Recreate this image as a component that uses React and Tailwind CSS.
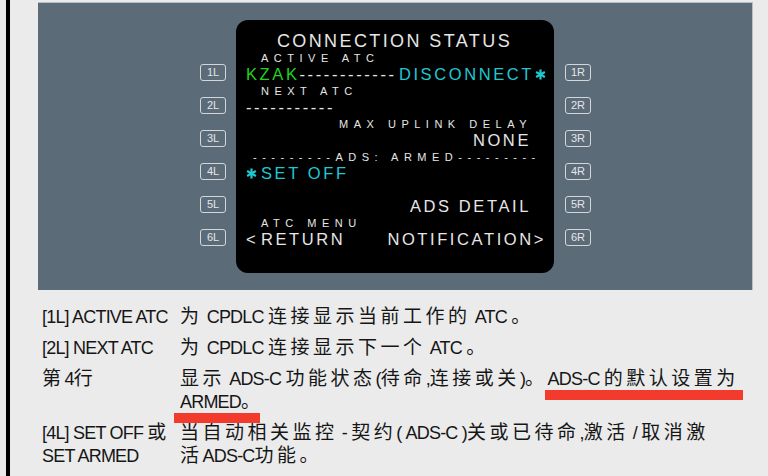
const CDU = "font-['Liberation_Sans',Arial,sans-serif]";
const LG = "text-[16.5px] tracking-[2.6px]";
const SM = "text-[11px] tracking-[5.5px]";
const LATIN = "font-['Liberation_Sans',Arial,sans-serif] text-[18px] tracking-[-0.8px] leading-[18px]";
const CJK = "font-['Noto_Sans_CJK_SC',sans-serif] text-[19px] tracking-[3.5px] leading-[18px]";

function Star() {
  return (
    <svg width="11" height="11" viewBox="0 0 12 12" className="inline-block">
      <g stroke="currentColor" strokeWidth="2.4">
        <line x1="6" y1="0.5" x2="6" y2="11.5" />
        <line x1="1.2" y1="3.2" x2="10.8" y2="8.8" />
        <line x1="1.2" y1="8.8" x2="10.8" y2="3.2" />
      </g>
    </svg>
  );
}

function Key({ label }) {
  return (
    <div className="flex h-[17px] w-[26px] items-center justify-center rounded-[3px] border-[1.5px] border-[#d3d7db] text-[11px] leading-none text-[#e4e6e8]">
      {label}
    </div>
  );
}

function Row({ className = "", children }) {
  return (
    <div className={`flex h-[16.5px] items-center whitespace-pre leading-[16.5px] ${className}`}>
      {children}
    </div>
  );
}

function Screen() {
  return (
    <div className={`h-[253px] w-[318px] rounded-[12px] bg-black pl-[10px] pr-[8px] pt-[13px] text-[#e6e6e6] ${CDU}`}>
      <Row className="justify-center pr-[3px] text-[18px] tracking-[2.4px]">CONNECTION STATUS</Row>
      <Row className={`pl-[15px] ${SM}`}>ACTIVE ATC</Row>
      <Row className={`justify-between ${LG}`}>
        <span>
          <span className="text-[#1fd41f]">KZAK</span>------------
        </span>
        <span className="flex items-center text-[#1fc9d2]">
          DISCONNECT
          <span className="flex w-[12px] justify-center">
            <Star />
          </span>
        </span>
      </Row>
      <Row className={`pl-[15px] ${SM}`}>NEXT ATC</Row>
      <Row className={LG}>-----------</Row>
      <Row className={`justify-end pr-[14px] ${SM}`}>MAX UPLINK DELAY</Row>
      <Row className={`justify-end pr-[15px] ${LG}`}>NONE</Row>
      <Row className={`pl-[7px] ${SM}`}>---------ADS: ARMED---------</Row>
      <Row className={`text-[#1fc9d2] ${LG}`}>
        <span className="flex w-[15px]">
          <Star />
        </span>
        SET OFF
      </Row>
      <Row />
      <Row className={`justify-end pr-[15px] ${LG}`}>ADS DETAIL</Row>
      <Row className={`pl-[15px] ${SM}`}>ATC MENU</Row>
      <Row className={`justify-between ${LG}`}>
        <span className="flex">
          <span className="w-[15px]">&lt;</span>RETURN
        </span>
        <span>NOTIFICATION&gt;</span>
      </Row>
    </div>
  );
}

function Mixed({ text }) {
  const parts = text.split(/([\x00-\x7F]+)/).filter(Boolean);
  return parts.map((p, i) =>
    /^[\x00-\x7F]+$/.test(p) ? (
      <span key={i} className={LATIN}>
        {p}
      </span>
    ) : (
      <span key={i} className={CJK}>
        {p}
      </span>
    )
  );
}

function Marked({ text, left, right }) {
  return (
    <span className={`relative ${LATIN}`}>
      <Mixed text={text} />
      <span className={`absolute top-[calc(100%+1px)] h-[10px] bg-[#f23a2d] ${left} ${right}`} />
    </span>
  );
}

const entries = [
  { label: ["[1L] ACTIVE ATC"], body: [<Mixed key="a" text="为 CPDLC 连接显示当前工作的 ATC 。" />] },
  { label: ["[2L] NEXT ATC"], body: [<Mixed key="a" text="为 CPDLC 连接显示下一个 ATC 。" />] },
  {
    label: ["第4行"],
    body: [
      <>
        <Mixed text="显示 ADS-C 功能状态(待命,连接或关)。" />
        <Marked text="ADS-C 的默认设置为" left="-left-[3px]" right="-right-[4px]" />
      </>,
      <Marked key="b" text="ARMED。" left="-left-[6px]" right="right-[4px]" />,
    ],
  },
  {
    label: ["[4L] SET OFF 或", "SET ARMED"],
    body: [
      <Mixed key="a" text="当自动相关监控 - 契约( ADS-C )关或已待命,激活 / 取消激" />,
      <Mixed key="b" text="活ADS-C功能。" />,
    ],
  },
  { label: ["[5L] ADS DETAIL"], body: [<Mixed key="a" text="选择后，显示 ADS DETAIL 页面。" />] },
];

export default function App() {
  return (
    <div className="flex h-[476px] w-[768px] overflow-hidden bg-[#ebebeb] pl-[6px]">
      <div className="w-[4px] shrink-0 bg-black" />
      <div className="pl-[28px] pt-[2px]">
        <div className="flex h-[288px] w-[715px] border-r border-t border-[#b9bfc4] bg-[#5c6b78] pl-[162px] pt-[17px]">
          <div className={`flex flex-col gap-[16px] pt-[44px] ${CDU}`}>
            {["1L", "2L", "3L", "4L", "5L", "6L"].map((k) => (
              <Key key={k} label={k} />
            ))}
          </div>
          <div className="ml-[10px] mr-[11px]">
            <Screen />
          </div>
          <div className={`flex flex-col gap-[16px] pt-[44px] ${CDU}`}>
            {["1R", "2R", "3R", "4R", "5R", "6R"].map((k) => (
              <Key key={k} label={k} />
            ))}
          </div>
        </div>

        <div className="mt-[16px] flex flex-col gap-[8px] pl-[4px] text-[#161616] font-['Liberation_Sans',Arial,sans-serif] text-[17px] leading-[23px]">
          {entries.map((e, i) => (
            <div key={i} className="grid grid-cols-[138px_1fr]">
              <div>
                {e.label.map((l, j) => (
                  <div key={j} className="h-[23px] whitespace-pre">
                    <Mixed text={l} />
                  </div>
                ))}
              </div>
              <div>
                {e.body.map((b, j) => (
                  <div key={j} className="h-[23px] whitespace-pre">
                    {b}
                  </div>
                ))}
              </div>
            </div>
          ))}
        </div>
      </div>
    </div>
  );
}
